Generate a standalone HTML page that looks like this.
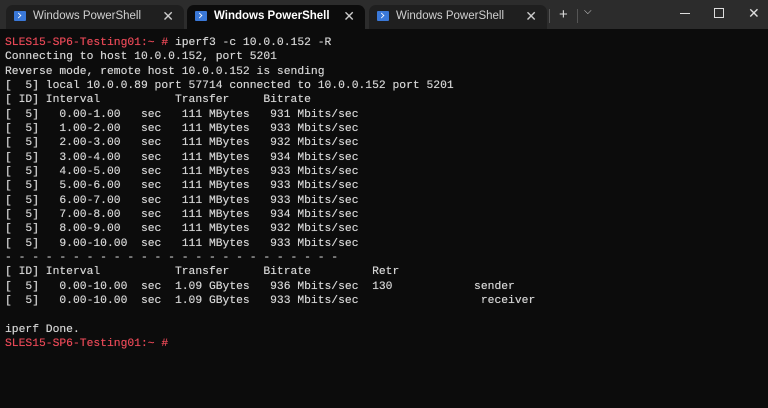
<!DOCTYPE html>
<html><head><style>
body{margin:0;width:768px;height:408px;background:#0c0c0c;overflow:hidden;font-family:"Liberation Sans",sans-serif}
.bar{position:absolute;left:0;top:0;width:768px;height:29px;background:#2c2c2c}
.tab{position:absolute;top:5px;height:24px;width:178px;background:#1f1f1f;border-radius:7px 7px 0 0;color:#d0d0d0;font-size:11.5px}
.tab.a{background:#0c0c0c;color:#fff;font-weight:bold}
.tab .ic{position:absolute;left:8px;top:6px;width:12px;height:10px;background:#3a78d8;border-radius:1px}
.tab .ic:after{content:"";position:absolute;left:2px;top:2px;width:4px;height:4px;border-right:1.5px solid #fff;border-top:1.5px solid #fff;transform:rotate(45deg) scale(.8)}
.tab .t{position:absolute;left:27px;top:5px}
.tab .x{position:absolute;right:10px;top:3px;font-size:14px;color:#ccc;font-weight:normal}
pre{position:absolute;left:5px;top:36px;margin:0;font-family:"Liberation Mono",monospace;font-size:11.33px;line-height:14.33px;color:#d4d4d4;text-shadow:0 0 0.4px #d4d4d4}
.r{color:#e74856;text-shadow:0 0 0.4px #e74856}
.w{position:absolute;color:#ddd;font-size:14px}
</style></head><body>
<div class="bar"></div>
<div class="tab" style="left:6px"><div class="ic"></div><span class="t">Windows PowerShell</span><span class="x">✕</span></div>
<div class="tab a" style="left:187px"><div class="ic"></div><span class="t">Windows PowerShell</span><span class="x">✕</span></div>
<div class="tab" style="left:369px"><div class="ic"></div><span class="t">Windows PowerShell</span><span class="x">✕</span></div>
<div style="position:absolute;left:549px;top:9px;width:1px;height:14px;background:#555"></div>
<div style="position:absolute;left:577px;top:9px;width:1px;height:14px;background:#555"></div>
<div class="w" style="left:559px;top:6px;font-size:15px">+</div>
<div class="w" style="left:584px;top:6px;font-size:10px">⌵</div>
<div style="position:absolute;left:680px;top:13px;width:10px;height:1px;background:#ddd"></div>
<div style="position:absolute;left:714px;top:8px;width:8px;height:8px;border:1px solid #ddd"></div>
<div class="w" style="left:748px;top:5px">✕</div>
<pre><span class="r">SLES15-SP6-Testing01:~ # </span>iperf3 -c 10.0.0.152 -R
Connecting to host 10.0.0.152, port 5201
Reverse mode, remote host 10.0.0.152 is sending
[  5] local 10.0.0.89 port 57714 connected to 10.0.0.152 port 5201
[ ID] Interval           Transfer     Bitrate
[  5]   0.00-1.00   sec   111 MBytes   931 Mbits/sec
[  5]   1.00-2.00   sec   111 MBytes   933 Mbits/sec
[  5]   2.00-3.00   sec   111 MBytes   932 Mbits/sec
[  5]   3.00-4.00   sec   111 MBytes   934 Mbits/sec
[  5]   4.00-5.00   sec   111 MBytes   933 Mbits/sec
[  5]   5.00-6.00   sec   111 MBytes   933 Mbits/sec
[  5]   6.00-7.00   sec   111 MBytes   933 Mbits/sec
[  5]   7.00-8.00   sec   111 MBytes   934 Mbits/sec
[  5]   8.00-9.00   sec   111 MBytes   932 Mbits/sec
[  5]   9.00-10.00  sec   111 MBytes   933 Mbits/sec
- - - - - - - - - - - - - - - - - - - - - - - - -
[ ID] Interval           Transfer     Bitrate         Retr
[  5]   0.00-10.00  sec  1.09 GBytes   936 Mbits/sec  130            sender
[  5]   0.00-10.00  sec  1.09 GBytes   933 Mbits/sec                  receiver

iperf Done.
<span class="r">SLES15-SP6-Testing01:~ #</span></pre>
</body></html>
